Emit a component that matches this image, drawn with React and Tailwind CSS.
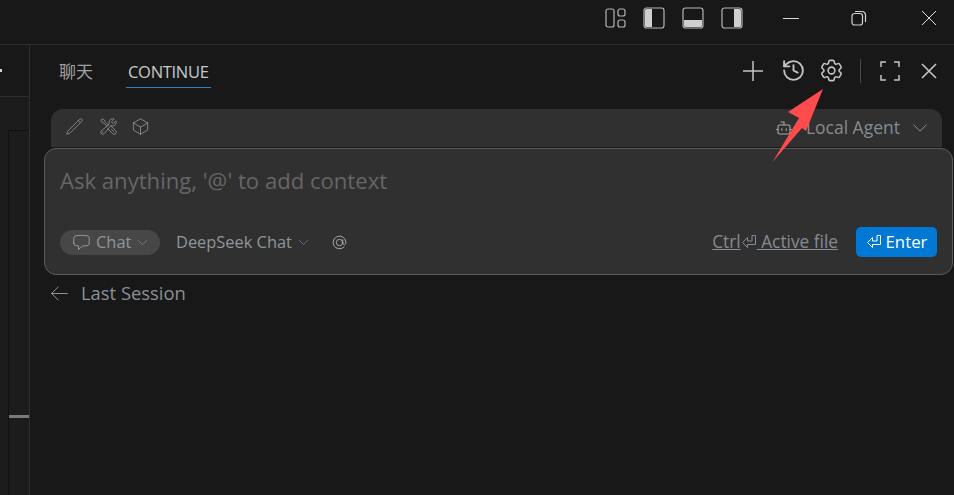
import { History, Bot } from 'lucide-react'
import {
  HiOutlineArrowLeft,
  HiOutlineAtSymbol,
  HiOutlineChatBubbleLeft,
  HiOutlineChevronDown,
  HiOutlineCog6Tooth,
  HiOutlineCube,
  HiOutlinePencil,
  HiOutlineWrenchScrewdriver,
} from 'react-icons/hi2'

const FONT = 'font-["Open_Sans","Noto_Sans_CJK_SC",sans-serif]'

function LayoutIcon({ fill }) {
  return (
    <svg width="22" height="22" viewBox="0 0 22 22" fill="none">
      <rect x="1" y="1" width="20" height="20" rx="2.5" stroke="#b5b5b5" strokeWidth="1.2" />
      {fill === 'left' && <path d="M2 3.500A1.500 1.500 0 0 1 3.500 2H9v18H3.500A1.500 1.500 0 0 1 2 18.500z" fill="#cfcfcf" />}
      {fill === 'bottom' && <path d="M2 13h18v5.500a1.500 1.500 0 0 1-1.500 1.500h-15A1.500 1.500 0 0 1 2 18.500z" fill="#cfcfcf" />}
      {fill === 'right' && <path d="M13 2h5.500A1.500 1.500 0 0 1 20 3.500v15a1.500 1.500 0 0 1-1.500 1.500H13z" fill="#cfcfcf" />}
    </svg>
  )
}

function CrossIcon({ size, width, color }) {
  return (
    <svg width={size} height={size} viewBox="0 0 16 16" fill="none" stroke={color} strokeWidth={width}>
      <path d="M1 1l14 14M15 1L1 15" />
    </svg>
  )
}

function ReturnIcon({ size, color }) {
  return (
    <svg width={size} height={size} viewBox="0 0 16 16" fill="none" stroke={color} strokeWidth="1" strokeLinejoin="round">
      <path d="M6.500 3.500L1.500 8.500l5 5v-3H14.500V1.500H11V7H6.500z" />
    </svg>
  )
}

function TitleBar() {
  return (
    <div className="h-[45px] shrink-0 border-b border-[#2c2c2c] pt-[7px]">
      <div className="h-[22px] flex items-center justify-end">
        <div className="flex items-center gap-[17px] mr-[40px]">
          <svg width="22" height="22" viewBox="0 0 22 22" fill="none" stroke="#b5b5b5" strokeWidth="1.2">
            <rect x="2" y="2" width="8" height="18" rx="2" />
            <rect x="14" y="2" width="7" height="7" rx="2" />
            <rect x="14" y="13" width="7" height="7" rx="2" />
          </svg>
          <LayoutIcon fill="left" />
          <LayoutIcon fill="bottom" />
          <LayoutIcon fill="right" />
        </div>
        <span className="w-[16px] h-px bg-[#d8d8d8] mr-[52px]" />
        <svg width="16" height="16" viewBox="0 0 16 16" fill="none" stroke="#d0d0d0" strokeWidth="1.2" className="mr-[54px]">
          <rect x="1" y="3.500" width="10.500" height="11.500" rx="2.500" />
          <path d="M4 1.500h7a3.500 3.500 0 0 1 3.500 3.500v7" />
        </svg>
        <div className="mr-[17px]">
          <CrossIcon size={16} width={1} color="#e0e0e0" />
        </div>
      </div>
    </div>
  )
}

function LeftStrip() {
  return (
    <div className="w-[30px] shrink-0 border-r border-[#2f2f2f] bg-[#1c1c1c] flex flex-col">
      <div className="h-[52px] shrink-0 border-b border-[#2c2c2c] bg-[#181818] flex items-center">
        <span className="w-[2px] h-[3px] bg-[#d5d5d5]" />
      </div>
      <div className="h-[33px] shrink-0" />
      <div className="flex-1 border-l border-t border-[#111] ml-[8px] flex flex-col">
        <div className="h-[284px] shrink-0" />
        <div className="h-[3px] bg-[#7a7a7a]" />
      </div>
    </div>
  )
}

function Header() {
  return (
    <div className="h-[51px] flex items-center pl-[29px] pr-[17px]">
      <span className="text-[17px] text-[#a0a0a0] mr-[33px] mt-[2px]">聊天</span>
      <div className="relative h-[44px] flex items-center px-[2px] mt-[3px]">
        <span className="text-[16.500px] text-[#c8c8c8] tracking-[-0.3px]">CONTINUE</span>
        <span className="absolute left-0 right-0 bottom-[6px] h-px bg-[#2f7fc4]" />
      </div>
      <div className="ml-auto flex items-center text-[#c4c4c4]">
        <svg width="22" height="22" viewBox="0 0 22 22" fill="none" stroke="currentColor" strokeWidth="1.500" className="mr-[17px]">
          <path d="M11 1v20M1 11h20" />
        </svg>
        <History size={25} strokeWidth={1.800} className="mr-[12px]" />
        <HiOutlineCog6Tooth size={27} strokeWidth={1.400} className="mr-[15px]" />
        <span className="w-px h-[24px] bg-[#4a4a4a] mr-[19px]" />
        <svg width="20" height="20" viewBox="0 0 20 20" fill="none" stroke="currentColor" strokeWidth="1.500" className="mr-[21px]">
          <path d="M1 6V1h5M14 1h5v5M19 14v5h-5M6 19H1v-5" />
        </svg>
        <CrossIcon size={16} width={1.600} color="currentColor" />
      </div>
    </div>
  )
}

function ToolBar() {
  return (
    <div className="ml-[21px] mr-[12px] mt-[13px] mb-px h-[38px] rounded-t-[12px] bg-[#303030] flex items-start pt-[6px] pl-[14px] pr-[12px] text-[#8f8f8f]">
      <HiOutlinePencil size={19} strokeWidth={1.100} className="mr-[15px] mt-[2px]" />
      <HiOutlineWrenchScrewdriver size={19} strokeWidth={1.100} className="mr-[13px] mt-[2px]" />
      <HiOutlineCube size={19} strokeWidth={1.100} className="mt-[2px]" />
      <div className="ml-auto flex items-center">
        <Bot size={18} strokeWidth={1.500} className="text-[#a5a5a5] mr-[13px] mt-[2px]" />
        <span className="text-[17.500px] leading-[24px] text-[#858b90] mr-[10px]">Local Agent</span>
        <HiOutlineChevronDown size={20} strokeWidth={1} className="text-[#a0a0a0] mt-[1px]" />
      </div>
    </div>
  )
}

function InputBox() {
  return (
    <div className="ml-[14px] mr-[1px] h-[127px] rounded-[12px] border border-[#5a5a5a] bg-[#303030] flex flex-col px-[15px]">
      <div className="h-[62px] pt-[16px] text-[22.100px] leading-[30px] text-[#666666]">Ask anything, '@' to add context</div>
      <div className="flex items-center h-[26px] mt-[18px]">
        <div className="h-[25px] w-[100px] rounded-full bg-[#474747] flex items-center pl-[12px] text-[#8f959a]">
          <HiOutlineChatBubbleLeft size={19} strokeWidth={1.100} className="text-[#a5a5a5] mr-[5px]" />
          <span className="text-[16.400px] mr-[5px]">Chat</span>
          <HiOutlineChevronDown size={13} strokeWidth={1.100} />
        </div>
        <span className="text-[16.400px] text-[#8f959a] ml-[16px] mr-[5px]">DeepSeek Chat</span>
        <HiOutlineChevronDown size={13} strokeWidth={1.100} className="text-[#8f959a]" />
        <HiOutlineAtSymbol size={17} strokeWidth={1.300} className="text-[#b0b0b0] ml-[21px]" />
        <span className="ml-auto text-[17.300px] text-[#858b90] underline mr-[18px] flex items-center">
          Ctrl<ReturnIcon size={16} color="#858b90" />&nbsp;Active file
        </span>
        <button className="h-[30px] w-[81px] rounded-[5px] bg-[#0078d4] text-white text-[16.800px] flex items-center justify-center gap-[4px]">
          <ReturnIcon size={16} color="#ffffff" />Enter
        </button>
      </div>
    </div>
  )
}

// red annotation arrow pointing at the settings icon
function RedArrow() {
  return (
    <svg className="absolute left-[768px] top-[86px]" width="62" height="78" viewBox="0 0 62 78" fill="none">
      <path d="M55 3L20 26 31 32 4.500 76 34 42 38 45z" fill="#fd4b4e" />
    </svg>
  )
}

export default function App() {
  return (
    <div className={`relative w-[954px] h-[495px] overflow-hidden bg-[#181818] flex flex-col ${FONT}`}>
      <TitleBar />
      <div className="flex-1 flex min-h-0">
        <LeftStrip />
        <div className="flex-1 min-w-0 flex flex-col">
          <Header />
          <ToolBar />
          <InputBox />
          <div className="flex items-center ml-[19px] mt-[6px] text-[#8a9096]">
            <HiOutlineArrowLeft size={21} strokeWidth={1} className="text-[#a0a0a0] mr-[11px]" />
            <span className="text-[18.400px] leading-[24px]">Last Session</span>
          </div>
        </div>
      </div>
      <RedArrow />
    </div>
  )
}
